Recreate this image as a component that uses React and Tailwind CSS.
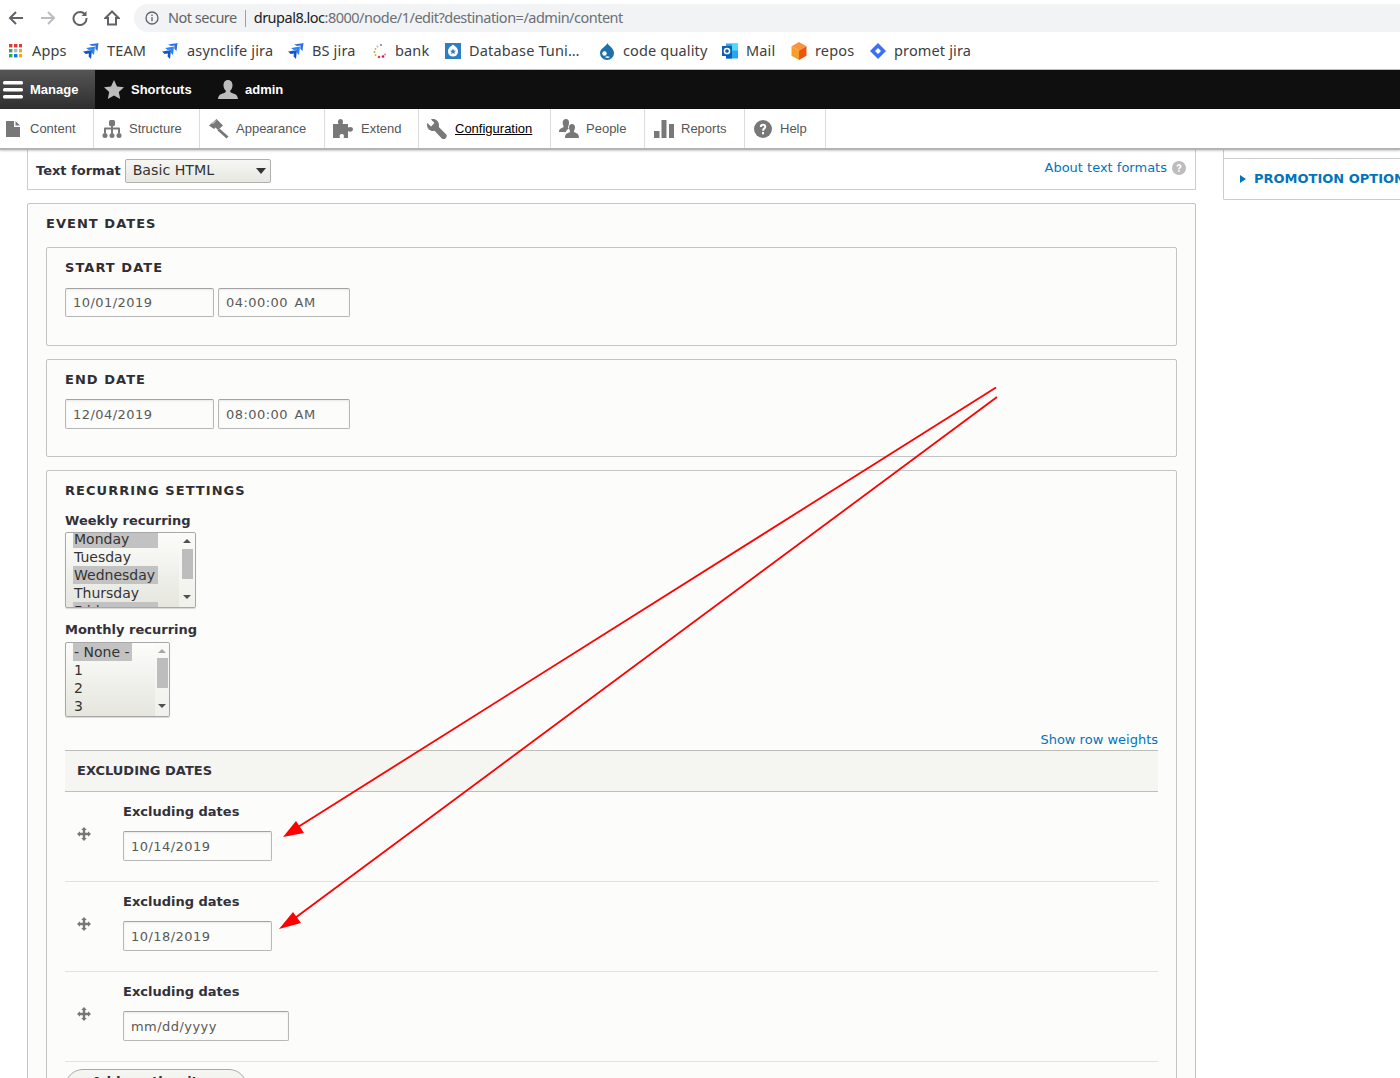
const ui = { fontFamily: '"Noto Sans", sans-serif' };

function Jira() {
  return (
    <svg width="16" height="16" viewBox="1 0 16 16" className="shrink-0">
      <path d="M7 1.500C9 1 14 .5 16.500 0c-.3 2.600-.7 5.500-1 8l-2.200-2.200.2-3.200-3.500.4z" fill="#2f6fe4" />
      <path d="M4 5c2.500-.5 6-1 9-1.500-.3 2.800-.7 6-1 8.500l-2.300-2.300.3-3-3.300.4z" fill="#2684ff" />
      <path d="M1 8.500c2.500-.5 6-1 9-1.500-.3 3-.7 6-1 9l-2.400-2.500.3-3-3.300.4z" fill="#1554c8" />
    </svg>
  );
}
function Apps() {
  const cols = ["#e53935", "#e53935", "#e53935", "#34a853", "#a8b8c8", "#f9ab00", "#34a853", "#1a73e8", "#f9ab00"];
  return (
    <svg width="14" height="14" viewBox="0 0 14 14" className="shrink-0">
      {cols.map((c, i) => (
        <rect key={i} x={(i % 3) * 5 + 1} y={Math.floor(i / 3) * 5} width="3.400" height="3.400" fill={c} />
      ))}
    </svg>
  );
}
function Bank() {
  return (
    <svg width="16" height="16" viewBox="0 0 16 16" className="shrink-0">
      <circle cx="9" cy="2" r=".9" fill="#7a5ea8" />
      <circle cx="5.500" cy="3.500" r=".9" fill="#c8a0d8" />
      <circle cx="3.500" cy="6" r=".9" fill="#e8b100" />
      <circle cx="2.500" cy="9" r="1" fill="#8bc34a" />
      <circle cx="3.500" cy="12" r="1" fill="#f9ab00" />
      <circle cx="7" cy="14" r="1.300" fill="#ea4335" />
      <circle cx="11" cy="13.500" r="1.300" fill="#c2185b" />
      <circle cx="13" cy="11.500" r=".9" fill="#f06292" />
    </svg>
  );
}
function Db() {
  return (
    <svg width="16" height="16" viewBox="0 0 16 16" className="shrink-0">
      <rect width="16" height="16" fill="#2f7ec2" />
      <path d="M8 1.600c2 2 5 3 5 7a5 5 0 0 1-10 0c0-4 3-5 5-7z" fill="#fff" />
      <path d="M8 5.500l.9 2 2.100.2-1.600 1.400.5 2.100L8 10.100l-1.900 1.100.5-2.100L5 7.700l2.100-.2z" fill="#2f7ec2" />
    </svg>
  );
}
function Drupal() {
  return (
    <svg width="16" height="17" viewBox="0 0 16 17" className="shrink-0">
      <path d="M8.500 0c.6 2.600 6.500 5 6.500 10a7 7 0 0 1-14 0C1 5.500 7 3.500 8.500 0z" fill="#1f6fa8" />
      <circle cx="5.500" cy="10.500" r="2.200" fill="#fff" />
      <path d="M6 14c1.500-1 3-1 5 0-1.500 1.300-3.500 1.300-5 0z" fill="#fff" />
    </svg>
  );
}
function Outlook() {
  return (
    <svg width="16" height="16" viewBox="0 0 16 16" className="shrink-0">
      <rect x="4" y="0.500" width="12" height="15" fill="#28a8ea" />
      <rect x="10" y="0.500" width="6" height="7" fill="#50d9ff" />
      <rect x="4" y="8" width="6" height="7.500" fill="#0364b8" />
      <rect x="0" y="3" width="10" height="10" fill="#0f5fad" />
      <circle cx="5" cy="8" r="2.600" fill="none" stroke="#fff" strokeWidth="1.500" />
    </svg>
  );
}
function Cube() {
  return (
    <svg width="16" height="18" viewBox="0 0 16 18" className="shrink-0">
      <path d="M8 0l7.500 4.300L8 8.500.5 4.300z" fill="#fb923c" />
      <path d="M.5 4.300L8 8.500V18L.5 13.700z" fill="#f59e2b" />
      <path d="M15.500 4.300L8 8.500V18l7.500-4.300z" fill="#ea580c" />
    </svg>
  );
}
function Diamond() {
  return (
    <svg width="16" height="16" viewBox="0 0 16 16" className="shrink-0">
      <path d="M8 0l8 8-8 8-8-8z" fill="#3b6ff5" />
      <path d="M8 5l3 3-3 3-3-3z" fill="#fff" />
    </svg>
  );
}

const bookmarks = [
  { w: "w-[75px]", g: "gap-[10px]", i: <Apps />, t: "Apps" },
  { w: "w-[79px]", g: "gap-[8px]", i: <Jira />, t: "TEAM" },
  { w: "w-[126px]", g: "gap-[9px]", i: <Jira />, t: "asynclife jira" },
  { w: "w-[84px]", g: "gap-[8px]", i: <Jira />, t: "BS jira" },
  { w: "w-[73px]", g: "gap-[7px]", i: <Bank />, t: "bank" },
  { w: "w-[154px]", g: "gap-[8px]", i: <Db />, t: "Database Tuni…" },
  { w: "w-[123px]", g: "gap-[8px]", i: <Drupal />, t: "code quality" },
  { w: "w-[69px]", g: "gap-[8px]", i: <Outlook />, t: "Mail" },
  { w: "w-[79px]", g: "gap-[8px]", i: <Cube />, t: "repos" },
  { w: "w-[110px]", g: "gap-[8px]", i: <Diamond />, t: "promet jira" },
];

function BrowserBar() {
  return (
    <div style={ui} className="bg-white">
      <div className="h-[35px] flex items-center pt-[1px]">
        <div className="w-[134px] flex items-center shrink-0 pl-[8px] gap-[16px]">
          <svg width="16" height="16" viewBox="0 0 16 16" fill="none" stroke="#5f6368" strokeWidth="2"><path d="M15 8H2M8 2L2 8l6 6" /></svg>
          <svg width="16" height="16" viewBox="0 0 16 16" fill="none" stroke="#b9bcc0" strokeWidth="2"><path d="M1 8h13M8 2l6 6-6 6" /></svg>
          <svg width="16" height="16" viewBox="0 0 16 16" fill="none" stroke="#5f6368" strokeWidth="2"><path d="M13.500 5A6.500 6.500 0 1 0 14.500 8" /><path d="M14.500 1v5h-5z" fill="#5f6368" stroke="none" /></svg>
          <svg width="16" height="16" viewBox="0 0 16 16" fill="none" stroke="#5f6368" strokeWidth="2"><path d="M8 1.500L1.500 8H4v6.500h8V8h2.500z" /></svg>
        </div>
        <div className="flex-1 h-[28px] bg-[#f1f3f4] rounded-l-full flex items-center pl-[11px] text-[14.500px] whitespace-nowrap tracking-[-0.5px]">
          <svg width="14" height="14" viewBox="0 0 14 14" fill="none" stroke="#5f6368" strokeWidth="1.300" className="shrink-0">
            <circle cx="7" cy="7" r="6" />
            <path d="M7 6v4.200M7 3.500v1.400" />
          </svg>
          <span className="ml-[9px] text-[#5f6368]">Not secure</span>
          <span className="mx-[8px] w-px h-[17px] bg-[#9aa0a6]" />
          <span className="text-[#202124]">drupal8.loc</span>
          <span className="text-[#6b7074]">:8000/node/1/edit?destination=/admin/content</span>
        </div>
      </div>
      <div className="h-[35px] flex items-center pl-[8px] pb-[2px] border-b border-[#bdbdbd]">
        {bookmarks.map((b) => (
          <div key={b.t} className={`${b.w} ${b.g} flex items-center shrink-0 text-[14.500px] text-[#3c4043] whitespace-nowrap tracking-[0.15px]`}>
            {b.i}
            <span>{b.t}</span>
          </div>
        ))}
      </div>
    </div>
  );
}

function Toolbar() {
  return (
    <div className="h-[39px] bg-[#0f0f0f] flex items-stretch text-white font-bold text-[13px]" style={{ fontFamily: '"Liberation Sans", sans-serif' }}>
      <div className="w-[95px] bg-gradient-to-b from-[#555555] to-[#2f2f2f] flex items-center pl-[3px] gap-[7px]">
        <svg width="20" height="18" viewBox="0 0 20 18" fill="#fff"><rect y="0" width="20" height="3.600" rx="1.500" /><rect y="7" width="20" height="3.600" rx="1.500" /><rect y="14" width="20" height="3.600" rx="1.500" /></svg>
        <span>Manage</span>
      </div>
      <div className="flex items-center pl-[9px] gap-[7px] w-[114px]">
        <svg width="20" height="19" viewBox="0 0 20 19" fill="#bcbcbc"><path d="M10 0l3 6.400 7 .8-5.200 4.700 1.400 7L10 15.400 3.800 19l1.400-7L0 7.200l7-.8z" /></svg>
        <span>Shortcuts</span>
      </div>
      <div className="flex items-center pl-[9px] gap-[7px]">
        <svg width="20" height="19" viewBox="0 0 20 19" fill="#bcbcbc"><path d="M10 0c3 0 4.500 2.300 4.500 5.200 0 2.500-1 4.300-2.200 5.300-.5 1.500.5 2.200 2.200 2.800 2.700.9 5 1.500 5.500 5.700H0c.5-4.200 2.800-4.800 5.500-5.700 1.700-.6 2.700-1.300 2.200-2.800C6.500 9.500 5.500 7.700 5.500 5.200 5.500 2.300 7 0 10 0z" /></svg>
        <span>admin</span>
      </div>
    </div>
  );
}

const G = "#787878";
const trayIcons = {
  content: <svg width="14" height="16" viewBox="0 0 14 16" fill={G}><path d="M0 0h8v6h6v10H0zM9.500 0L14 4.500H9.500z" /></svg>,
  structure: <svg width="20" height="18" viewBox="0 0 20 18" fill={G}><rect x="7" y="0" width="6" height="6" rx="1.500" /><rect x="9" y="5" width="2" height="5" /><path d="M2 8.500c0-.5.500-1 1-1h14c.5 0 1 .5 1 1V13h-2v-3.500h-5V13H9V9.500H4V13H2z" /><circle cx="3" cy="15.500" r="2.500" /><circle cx="10" cy="15.500" r="2.500" /><circle cx="17" cy="15.500" r="2.500" /></svg>,
  appearance: <svg width="20" height="20" viewBox="0 0 20 20" fill={G}><path d="M7.500 0L14 6.500 9 11 6.500 8.500 5 10 0 6.500z" /><path d="M3.500 5L7 1.500" stroke="#fff" strokeWidth=".8" /><path d="M10.500 9.500L19.500 17.500 17.500 19.500 8.500 11.500z" /></svg>,
  extend: <svg width="20" height="19" viewBox="0 0 20 19" fill={G}><path d="M0 5h5.500C4.500 3 5 0 7.500 0s3 3 2 5H15v3.500c2-1 5-.7 5 1.800s-3 2.800-5 1.800V19h-4.500c1-2 .5-4-1.700-4s-2.800 2-1.800 4H0z" /></svg>,
  config: <svg width="20" height="20" viewBox="0 0 20 20" fill={G}><path d="M6 0c-.7 0-1.400.1-2 .4L7.500 4 4 7.500.4 4C.1 4.600 0 5.300 0 6c0 3.300 2.700 6 6 6 .6 0 1.100-.1 1.600-.2l7.200 7.600c1 1 2.600 1 3.600 0l.6-.6c1-1 1-2.600 0-3.600L11.800 8c.1-.6.200-1.300.200-2 0-3.300-2.700-6-6-6z" /></svg>,
  people: <svg width="20" height="19" viewBox="0 0 20 19" fill={G}><path d="M7 0c2 0 3 1.500 3 3.500S9.500 7 9 8c0 1 1 1.500 1 1.500S7 11 7 13H0c0-3 1.500-3.500 3.500-4.300C4.500 8.200 4.800 7.700 4.500 7 4 6.300 3.700 5 3.700 3.500 3.700 1.500 5 0 7 0z" /><path d="M13 5c2 0 3 1.500 3 3.500 0 1.300-.5 2.500-1 3.200-.3.800 0 1.400 1 1.800 2 .8 4 1.500 4 5.500H6c0-4 2-4.700 4-5.500 1-.4 1.300-1 1-1.800-.5-.7-1-1.900-1-3.200C10 6.500 11 5 13 5z" /></svg>,
  reports: <svg width="20" height="18" viewBox="0 0 20 18" fill={G}><rect x="0" y="11" width="5.500" height="7" /><rect x="7.500" y="0" width="5" height="18" /><rect x="15" y="4" width="5" height="14" /></svg>,
  help: <svg width="18" height="18" viewBox="0 0 18 18"><circle cx="9" cy="9" r="9" fill={G} /><path d="M5.800 7c0-2 1.400-3.200 3.300-3.200S12.300 5 12.300 6.800c0 2.300-2.300 2.400-2.300 4H8c0-2.700 2.200-2.900 2.200-4.100 0-.6-.5-1-1.100-1-.7 0-1.200.5-1.200 1.300zM8 12h2v2.200H8z" fill="#fff" /></svg>,
};
const tray = [
  { w: "w-[94px]", pl: "pl-[6px]", g: "gap-[10px]", i: "content", t: "Content" },
  { w: "w-[106px]", pl: "pl-[8px]", g: "gap-[7px]", i: "structure", t: "Structure" },
  { w: "w-[125px]", pl: "pl-[9px]", g: "gap-[7px]", i: "appearance", t: "Appearance" },
  { w: "w-[94px]", pl: "pl-[8px]", g: "gap-[8px]", i: "extend", t: "Extend" },
  { w: "w-[132px]", pl: "pl-[8px]", g: "gap-[8px]", i: "config", t: "Configuration", active: true },
  { w: "w-[94px]", pl: "pl-[8px]", g: "gap-[7px]", i: "people", t: "People" },
  { w: "w-[100px]", pl: "pl-[9px]", g: "gap-[7px]", i: "reports", t: "Reports" },
  { w: "w-[81px]", pl: "pl-[9px]", g: "gap-[8px]", i: "help", t: "Help" },
];
function Tray() {
  return (
    <div className="h-[41px] bg-white flex border-b-[2px] border-[#b4b4b4] shadow-[0_1px_2px_rgba(0,0,0,0.2)] relative z-10 text-[13px]" style={{ fontFamily: '"Liberation Sans", sans-serif' }}>
      {tray.map((x) => (
        <div key={x.t} className={`${x.w} ${x.pl} ${x.g} h-[39px] flex items-center border-r border-[#dcdcdc] shrink-0 ${x.active ? "text-black" : "text-[#565656]"}`}>
          {trayIcons[x.i]}
          <span className={x.active ? "underline" : ""}>{x.t}</span>
        </div>
      ))}
    </div>
  );
}

const legend = "font-bold uppercase text-[13px] tracking-[0.08em] text-[#2f2e33] leading-[16px]";
const label = "font-bold text-[13px] text-[#33313a] leading-[16px]";
function Field({ v, w, h = "h-[30px]" }) {
  return (
    <input
      readOnly
      defaultValue={v}
      className={`${w} ${h} block px-[7px] border border-[#b8b8b8] border-t-[#a3a3a3] rounded-[2px] bg-[#fcfcfa] text-[13px] tracking-[0.035em] [word-spacing:2px] text-[#595959] shadow-[inset_0_1px_2px_rgba(0,0,0,0.08)] outline-none`}
    />
  );
}
function DateBox({ title, d, t, cls, mt, h }) {
  return (
    <div className={`border border-[#c4c4c4] rounded-[2px] px-[18px] ${cls}`}>
      <div className={`${legend} pt-[12px]`}>{title}</div>
      <div className={`flex gap-[4px] ${mt}`}>
        <Field v={d} w="w-[149px]" h={h} />
        <Field v={t} w="w-[132px]" h={h} />
      </div>
    </div>
  );
}

function ListBox({ w, h, items, sbW, thumbH, thumbMt, faded, pad }) {
  return (
    <div className={`${w} ${h} flex border border-[#a8a8a8] rounded-[2px] overflow-hidden bg-gradient-to-b from-[#fcfcfa] to-[#e6e6df] shadow-[0_1px_1px_rgba(0,0,0,0.15)]`}>
      <div className={`flex-1 min-w-0 pl-[7px] ${pad} text-[14px] leading-[18px] text-[#333]`}>
        {items.map(([t, sel, cw]) => (
          <div key={t} className={`h-[18px] pl-[1px] shrink-0 ${cw} ${sel ? "bg-[#c2c2c2]" : ""}`}>{t}</div>
        ))}
      </div>
      <div className={`${sbW} h-full shrink-0 flex flex-col items-center bg-[#f8f8f5]/60`}>
        <div className={`mt-[6px] w-0 h-0 border-x-[4px] border-x-transparent border-b-[4px] ${faded ? "border-b-[#a6a6a6]" : "border-b-[#505050]"}`} />
        <div className={`${thumbH} ${thumbMt} w-[11px] bg-[#bdbdbd] shrink-0`} />
        <div className="mt-auto mb-[8px] w-0 h-0 border-x-[4px] border-x-transparent border-t-[4px] border-t-[#505050]" />
      </div>
    </div>
  );
}

function Drag() {
  return (
    <svg width="14" height="14" viewBox="0 0 14 14" fill="#787878" className="shrink-0">
      <path d="M7 0l2.800 3H8.200v2.800H11V4.200L14 7l-3 2.800V8.200H8.200V11h1.600L7 14l-2.800-3h1.600V8.200H3v1.600L0 7l3-2.800v1.600h2.800V3H4.200z" />
    </svg>
  );
}
function ExRow({ v, w, h }) {
  return (
    <div className={`flex ${h} border-b border-[#e2e2de]`}>
      <div className="w-[58px] shrink-0 pl-[12px] flex items-center pb-[6px]"><Drag /></div>
      <div className="pt-[12px]">
        <div className={label}>Excluding dates</div>
        <div className="mt-[11px]"><Field v={v} w={w} /></div>
      </div>
    </div>
  );
}

function Content() {
  return (
    <div className="flex items-start h-[929px] overflow-hidden bg-white" style={{ fontFamily: '"DejaVu Sans", sans-serif' }}>
      <div className="ml-[27px] w-[1169px] shrink-0">
        <div className="h-[40px] border-x border-b border-[#cccccc] flex justify-between pl-[8px] pr-[9px] bg-white">
          <div className="flex items-center gap-[4px] pt-[1px] mt-[8px] h-[24px]">
            <span className="font-bold text-[13px] text-[#33313a]">Text format</span>
            <div className="w-[146px] h-[24px] border border-[#b0b0b0] rounded-[2px] bg-gradient-to-b from-[#f6f6f3] to-[#e8e8e2] flex items-center justify-between pl-[7px] pr-[4px] text-[14.200px] text-[#333]">
              <span>Basic HTML</span>
              <span className="w-0 h-0 border-x-[5px] border-x-transparent border-t-[6px] border-t-[#333]" />
            </div>
          </div>
          <div className="flex items-center gap-[5px] h-[35px] text-[13px] text-[#0074bd]">
            <span>About text formats</span>
            <svg width="14" height="14" viewBox="0 0 18 18"><circle cx="9" cy="9" r="9" fill="#bdbdbd" /><path d="M5.800 7c0-2 1.400-3.200 3.300-3.200S12.300 5 12.300 6.800c0 2.300-2.300 2.400-2.300 4H8c0-2.700 2.200-2.900 2.200-4.100 0-.6-.5-1-1.100-1-.7 0-1.200.5-1.200 1.300zM8 12h2v2.200H8z" fill="#fff" /></svg>
          </div>
        </div>

        <div className="mt-[13px] border border-[#c4c4c4] rounded-[2px] bg-[#fcfcfa] px-[18px] pb-[30px]">
          <div className={`${legend} pt-[12px]`}>Event dates</div>
          <DateBox title="Start date" d="10/01/2019" t="04:00:00 AM" cls="mt-[15px] h-[99px]" mt="mt-[12px]" h="h-[29px]" />
          <DateBox title="End date" d="12/04/2019" t="08:00:00 AM" cls="mt-[13px] h-[98px]" mt="mt-[11px]" h="h-[30px]" />
          <div className="mt-[13px] border border-[#c4c4c4] rounded-[2px] px-[18px] pb-[40px]">
            <div className={`${legend} pt-[12px]`}>Recurring settings</div>
            <div className={`${label} mt-[14px]`}>Weekly recurring</div>
            <div className="mt-[3px]">
              <ListBox
                w="w-[131px]"
                h="h-[76px]"
                sbW="w-[16px]"
                pad="-mt-[3px]"
                thumbH="h-[30px]"
                thumbMt="mt-[6px]"
                items={[
                  ["Monday", true, "w-[85px]"],
                  ["Tuesday", false, "w-[85px]"],
                  ["Wednesday", true, "w-[85px]"],
                  ["Thursday", false, "w-[85px]"],
                  ["Friday", true, "w-[85px]"],
                ]}
              />
            </div>
            <div className={`${label} mt-[14px]`}>Monthly recurring</div>
            <div className="mt-[4px]">
              <ListBox
                w="w-[105px]"
                h="h-[75px]"
                sbW="w-[14px]"
                pad="pt-0"
                faded
                thumbH="h-[30px]"
                thumbMt="mt-[5px]"
                items={[
                  ["- None -", true, "w-[59px]"],
                  ["1", false, "w-[59px]"],
                  ["2", false, "w-[59px]"],
                  ["3", false, "w-[59px]"],
                ]}
              />
            </div>
            <div className="mt-[14px] text-right text-[13px] leading-[18px] text-[#0074bd]">Show row weights</div>
            <div className="h-[42px] mt-[1px] flex items-center pl-[12px] bg-[#f5f5f2] border-y border-[#bfbfba] font-bold text-[13px] text-[#33313a]">EXCLUDING DATES</div>
            <ExRow v="10/14/2019" w="w-[149px]" h="h-[90px]" />
            <ExRow v="10/18/2019" w="w-[149px]" h="h-[90px]" />
            <ExRow v="mm/dd/yyyy" w="w-[166px]" h="h-[90px]" />
            <div className="mt-[7px] w-[182px] h-[36px] border border-[#a8a8a8] rounded-full bg-gradient-to-b from-[#f6f6f3] to-[#e8e8e4] text-center font-bold text-[13px] leading-[23px] text-[#333]">Add another item</div>
          </div>
        </div>
      </div>

      <div className="ml-[27px] flex-1 min-w-0">
        <div className="h-[9px] border-l border-b border-[#cccccc]" />
        <div className="h-[41px] border-l border-b border-[#cccccc] rounded-bl-[2px] flex items-center pl-[16px] gap-[8px] whitespace-nowrap bg-white">
          <span className="w-0 h-0 border-y-[4px] border-y-transparent border-l-[6px] border-l-[#0074bd] shrink-0" />
          <span className="font-bold text-[13px] text-[#0074bd]">PROMOTION OPTIONS</span>
        </div>
      </div>
    </div>
  );
}

function Arrows() {
  return (
    <svg className="absolute left-0 top-0 pointer-events-none z-20" width="1400" height="1078" viewBox="0 0 1400 1078">
      <path d="M996 387.500L298 827" stroke="#ff0000" strokeWidth="1.800" fill="none" />
      <path d="M283 837L296 821L304 833z" fill="#ff0000" />
      <path d="M997 397L295 918" stroke="#ff0000" strokeWidth="1.800" fill="none" />
      <path d="M279 929L293 912L301 923z" fill="#ff0000" />
    </svg>
  );
}

export default function App() {
  return (
    <div className="relative w-[1400px] h-[1078px] overflow-hidden bg-white">
      <BrowserBar />
      <Toolbar />
      <Tray />
      <Content />
      <Arrows />
    </div>
  );
}
